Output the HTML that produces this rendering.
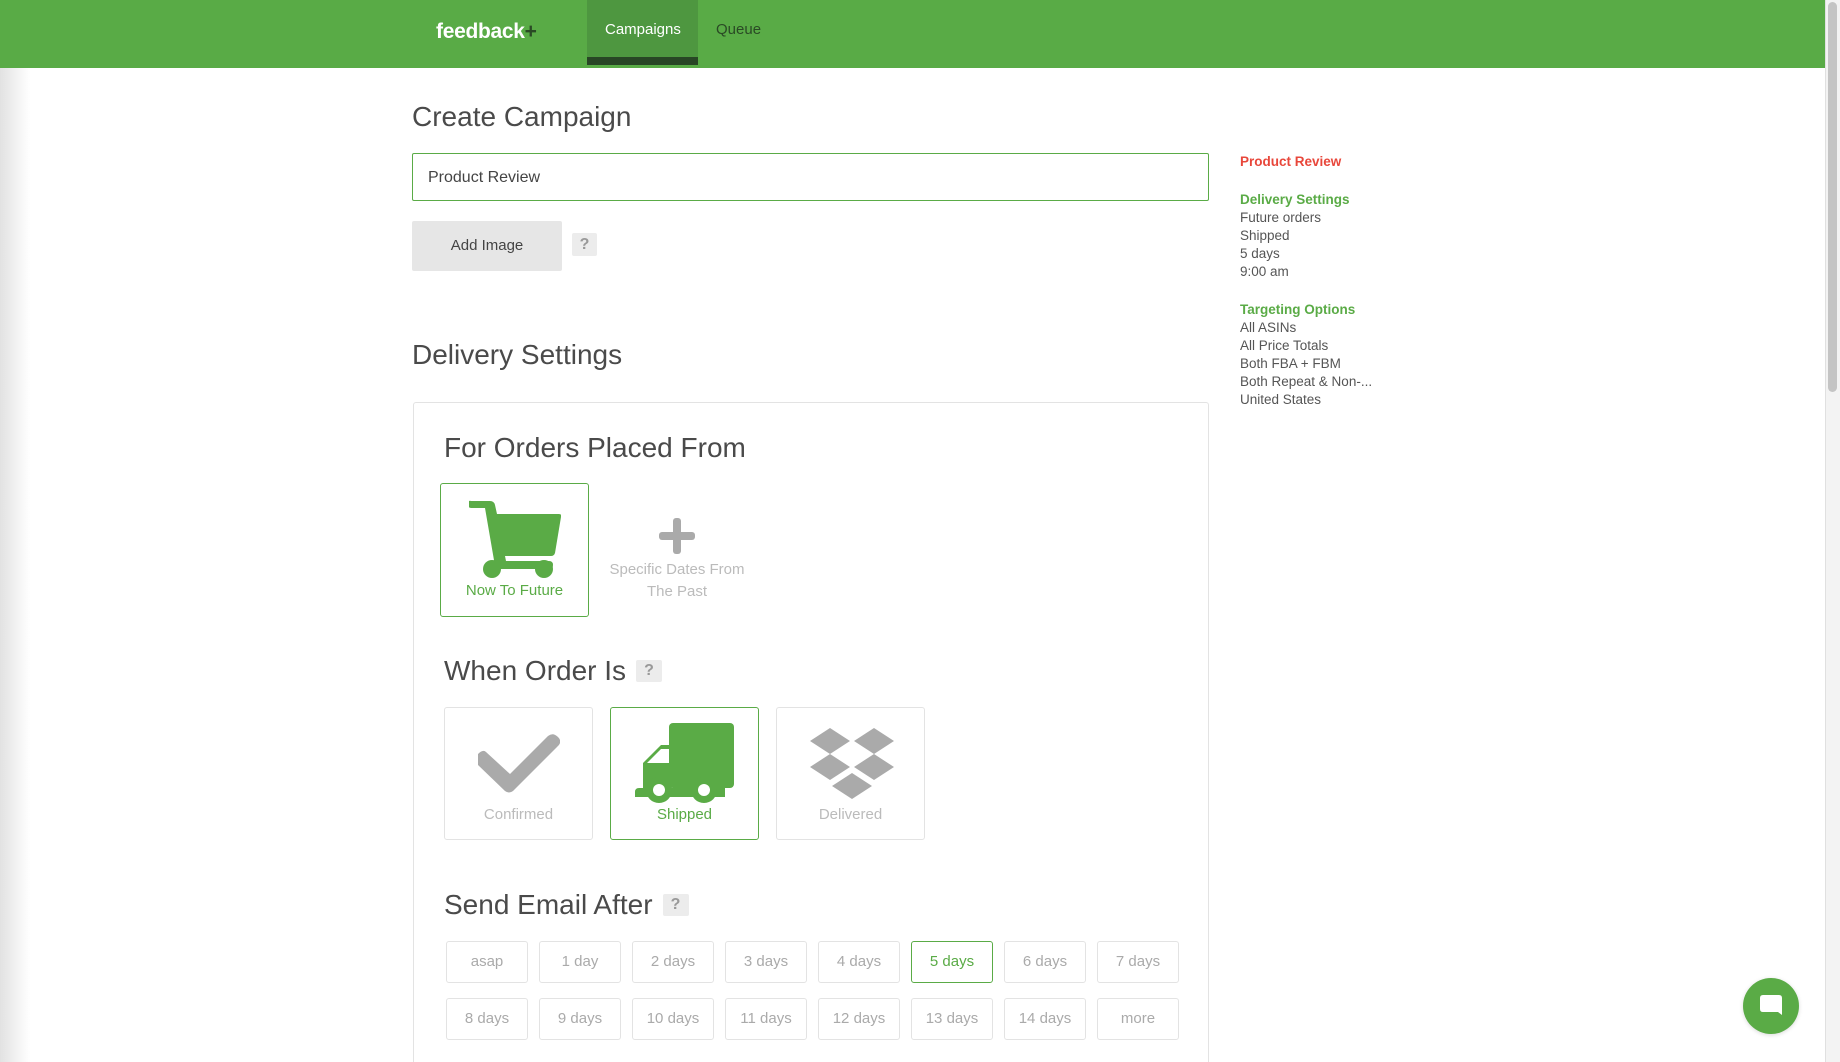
<!DOCTYPE html>
<html style="overflow:hidden"><head><meta charset="utf-8"><style>
*{box-sizing:border-box;margin:0;padding:0}
html,body{width:1840px;height:1062px;overflow:hidden}
body{position:relative;background:#fff;font-family:"Liberation Sans",sans-serif;color:#444}
.abs{position:absolute}
.hdr{left:0;top:0;width:1826px;height:68px;background:#59ab46}
.shadow{left:0;top:68px;width:30px;height:994px;background:linear-gradient(to right,#e2e2e2,#fff)}
.tab{left:587px;top:0;width:111px;height:65px;background:#4e9740}
.tabbar{left:587px;top:57px;width:111px;height:8px;background:#284625}
.h1{font-size:28px;color:#4a4a4a;font-weight:normal;display:flex;align-items:center;white-space:nowrap}
.box{border:1px solid #e3e3e3;border-radius:3px;background:#fff}
.sel{border:1.5px solid #5aab46}
.lbl{font-size:15px;color:#bbb;text-align:center;width:100%}
.q{background:#ececec;color:#999;font-weight:bold;font-size:16px;text-align:center;border-radius:2px}
.h1 .q{width:26px;height:22px;line-height:22px;margin-left:10px;display:inline-block}
.day{width:82px;height:42px;line-height:40px;text-align:center;font-size:15px;color:#aaa}
.sb{font-size:13.5px;line-height:18px;color:#555}
</style></head><body>
<div class="abs hdr"></div>
<div class="abs tab"></div><div class="abs tabbar"></div>
<div class="abs" style="left:436px;top:20px;font-size:21px;font-weight:bold;color:#fff;letter-spacing:-0.3px">feedback<span style="color:#2a4a25">+</span></div>
<div class="abs" style="left:605px;top:21px;font-size:15px;color:#fff">Campaigns</div>
<div class="abs" style="left:716px;top:21px;font-size:15px;color:#2a4a25">Queue</div>
<div class="abs shadow"></div>
<div class="abs" style="left:1825px;top:0;width:15px;height:1062px;background:#f3f3f3;border-left:1px solid #e0e0e0"></div>
<div class="abs" style="left:1828px;top:2px;width:9px;height:390px;background:#c4c4c4;border-radius:5px"></div>

<div class="abs h1" style="left:412px;top:101px">Create Campaign</div>
<div class="abs" style="left:412px;top:153px;width:797px;height:48px;border:1px solid #5aab46;border-radius:2px;padding-left:15px;line-height:48px;font-size:16px;color:#444">Product Review</div>
<div class="abs" style="left:412px;top:221px;width:150px;height:50px;background:#e6e6e6;border-radius:2px;text-align:center;line-height:50px;font-size:15px;color:#444">Add Image</div>
<div class="abs q" style="left:572px;top:233px;width:25px;height:23px;line-height:23px">?</div>

<div class="abs h1" style="left:412px;top:339px">Delivery Settings</div>
<div class="abs" style="left:413px;top:402px;width:796px;height:680px;border:1px solid #e3e3e3;border-radius:3px"></div>
<div class="abs h1" style="left:444px;top:432px">For Orders Placed From</div>

<div class="abs box sel" style="left:440px;top:483px;width:149px;height:134px">
<svg class="abs" style="left:28px;top:15px" width="92" height="82" viewBox="0 0 92 82"><path d="M2 2h19q4 0 5 4l2 9h62q3 0 2 3l-6 36q-1 3-4 3h-46l1 5h43q4 0 4 4t-4 4h-50q-3 0-4-3l-10-58h-14q-3 0-3-4t3-3z" fill="#5aab46"/><circle cx="23" cy="70" r="9" fill="#5aab46"/><circle cx="75" cy="70" r="9" fill="#5aab46"/></svg>
<div class="abs lbl" style="top:98px;color:#5aab46">Now To Future</div></div>
<svg class="abs" style="left:659px;top:518px" width="36" height="36"><rect x="14" y="0" width="8" height="36" rx="3" fill="#aaa"/><rect x="0" y="14" width="36" height="8" rx="3" fill="#aaa"/></svg>
<div class="abs lbl" style="left:592px;top:559px;width:170px;line-height:22px">Specific Dates From<br>The Past</div>

<div class="abs h1" style="left:444px;top:655px">When Order Is<span class="q">?</span></div>

<div class="abs box" style="left:444px;top:707px;width:149px;height:133px">
<svg class="abs" style="left:33px;top:24px" width="82" height="62" viewBox="0 0 82 62"><path d="M8 20l24 22l38-38q5-4 10 1t-1 10l-44 44q-4 3-8 0l-28-27q-4-5 1-10t8-2z" fill="#aaa"/></svg>
<div class="abs lbl" style="top:98px">Confirmed</div></div>
<div class="abs box sel" style="left:610px;top:707px;width:149px;height:133px">
<svg class="abs" style="left:23px;top:15px" width="102" height="82" viewBox="0 0 102 82"><rect x="35" y="0" width="65" height="65" rx="4" fill="#5aab46"/><path d="M35 22h-8l-18 18v25h-4q-4 0-4 4v5h90v-9h-56z" fill="#5aab46"/><path d="M13 40l14-14h8v14z" fill="#fff"/><circle cx="25" cy="67" r="13" fill="#5aab46"/><circle cx="25" cy="67" r="6" fill="#fff"/><circle cx="70" cy="67" r="13" fill="#5aab46"/><circle cx="70" cy="67" r="6" fill="#fff"/></svg>
<div class="abs lbl" style="top:98px;color:#5aab46">Shipped</div></div>
<div class="abs box" style="left:776px;top:707px;width:149px;height:133px">
<svg class="abs" style="left:33px;top:20px" width="84" height="72" viewBox="0 0 84 72"><g fill="#aaa"><path d="M0 13l20-13l20 13l-20 13z"/><path d="M44 13l20-13l20 13l-20 13z"/><path d="M0 39l20-13l20 13l-20 13z"/><path d="M44 39l20-13l20 13l-20 13z"/><path d="M22 58l20-13l20 13l-20 13z"/></g></svg>
<div class="abs lbl" style="top:98px">Delivered</div></div>

<div class="abs h1" style="left:444px;top:889px">Send Email After<span class="q">?</span></div>

<div class="abs box day" style="left:446px;top:941px">asap</div>
<div class="abs box day" style="left:539px;top:941px">1 day</div>
<div class="abs box day" style="left:632px;top:941px">2 days</div>
<div class="abs box day" style="left:725px;top:941px">3 days</div>
<div class="abs box day" style="left:818px;top:941px">4 days</div>
<div class="abs box day sel" style="left:911px;top:941px;color:#5aab46">5 days</div>
<div class="abs box day" style="left:1004px;top:941px">6 days</div>
<div class="abs box day" style="left:1097px;top:941px">7 days</div>
<div class="abs box day" style="left:446px;top:998px">8 days</div>
<div class="abs box day" style="left:539px;top:998px">9 days</div>
<div class="abs box day" style="left:632px;top:998px">10 days</div>
<div class="abs box day" style="left:725px;top:998px">11 days</div>
<div class="abs box day" style="left:818px;top:998px">12 days</div>
<div class="abs box day" style="left:911px;top:998px">13 days</div>
<div class="abs box day" style="left:1004px;top:998px">14 days</div>
<div class="abs box day" style="left:1097px;top:998px">more</div>

<div class="abs sb" style="left:1240px;top:153px;color:#e8473b;font-weight:bold">Product Review</div>
<div class="abs sb" style="left:1240px;top:191px"><b style="color:#5aab46">Delivery Settings</b><br>Future orders<br>Shipped<br>5 days<br>9:00 am</div>
<div class="abs sb" style="left:1240px;top:301px"><b style="color:#5aab46">Targeting Options</b><br>All ASINs<br>All Price Totals<br>Both FBA + FBM<br>Both Repeat &amp; Non-...<br>United States</div>

<div class="abs" style="left:1743px;top:978px;width:56px;height:56px;border-radius:50%;background:#5aab46;box-shadow:0 1px 4px rgba(0,0,0,.15)"></div>
<svg class="abs" style="left:1760px;top:995px" width="22" height="24" viewBox="0 0 22 24"><path d="M3 0h16q3 0 3 3v17l-4-3h-15q-3 0-3-3v-11q0-3 3-3z" fill="#fff"/></svg>
</body></html>
